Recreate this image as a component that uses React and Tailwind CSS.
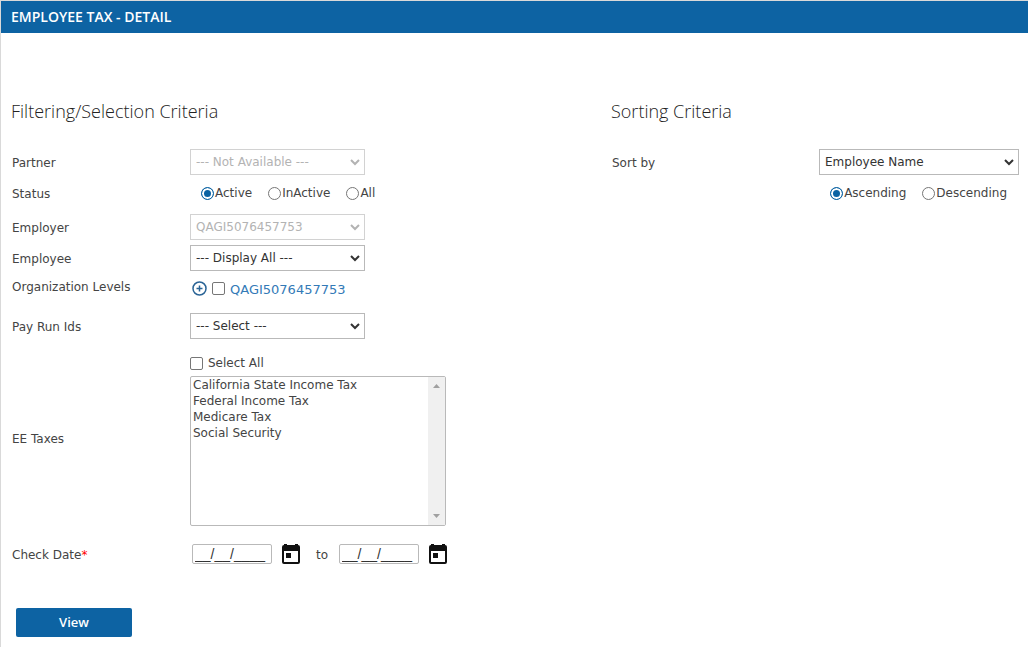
// src/pages/EmployeeTaxDetail.jsx
import { useState } from "react";

const taxes = [
  "California State Income Tax",
  "Federal Income Tax",
  "Medicare Tax",
  "Social Security",
];

const SelectBox = ({ id, options, disabled, className }) => (
  <div
    className={`relative h-[26px] border ${
      disabled ? "border-[#d2d2d2] text-[#b3b3b3]" : "border-[#b9b9b9] text-[#333]"
    } ${className}`}
  >
    <select
      id={id}
      disabled={disabled}
      className="h-full w-full appearance-none bg-transparent pl-[5px] pr-5 opacity-100"
    >
      {options.map((option) => (
        <option key={option}>{option}</option>
      ))}
    </select>
    <svg
      className="pointer-events-none absolute right-1 top-2 h-2 w-[10px]"
      viewBox="0 0 10 8"
      fill="none"
      stroke="currentColor"
      strokeWidth="2"
    >
      <path d="M1 2l4 4 4-4" />
    </svg>
  </div>
);

const Radio = ({ name, label, checked, onChange }) => (
  <label className="flex items-center gap-px">
    <input
      type="radio"
      name={name}
      checked={checked}
      onChange={onChange}
      className="h-[13px] w-[13px] appearance-none rounded-full border border-[#767676] bg-white checked:border-[#0b63a3] checked:bg-[#0b63a3] checked:shadow-[inset_0_0_0_2px_#fff]"
    />
    {label}
  </label>
);

const Checkbox = ({ id, ...props }) => (
  <input
    id={id}
    type="checkbox"
    className="h-[13px] w-[13px] appearance-none rounded-[2px] border border-[#767676] bg-white checked:bg-[#0b63a3]"
    {...props}
  />
);

const DateField = ({ label }) => (
  <div className="flex items-center gap-[10px]">
    <input
      type="text"
      aria-label={label}
      defaultValue="__/__/____"
      className="h-5 w-20 rounded-[2px] border border-[#b9b9b9] px-[2px] font-['Liberation_Sans',sans-serif] text-sm leading-4 text-[#333]"
    />
    <button type="button" aria-label={`Pick ${label}`}>
      <svg className="h-5 w-[18px]" viewBox="0 0 18 20">
        <path
          fill="#111"
          fillRule="evenodd"
          d="M2 0h3v1h8V0h3v1a2 2 0 0 1 2 2v15a2 2 0 0 1-2 2H2a2 2 0 0 1-2-2V3a2 2 0 0 1 2-2zM2 7v11h14V7zM4 9h5v5H4z"
        />
      </svg>
    </button>
  </div>
);

const Row = ({ label, htmlFor, className, children }) => (
  <div className={`flex items-center ${className}`}>
    <label htmlFor={htmlFor} className="w-[178px] shrink-0 pt-px">
      {label}
    </label>
    {children}
  </div>
);

const App = () => {
  const [status, setStatus] = useState("Active");
  const [order, setOrder] = useState("Ascending");
  const [selected, setSelected] = useState([]);

  return (
    <div className="min-h-screen border-l border-t border-[#d9d9d9] bg-white font-['DejaVu_Sans',sans-serif] text-xs text-[#444]">
      {/* Title bar */}
      <header className="flex h-8 items-center bg-[#0d63a3] px-[10px]">
        <h1 className="font-['Open_Sans',sans-serif] text-sm font-semibold text-white">
          EMPLOYEE TAX - DETAIL
        </h1>
      </header>

      <form onSubmit={(e) => e.preventDefault()}>
        <div className="flex justify-between pl-[11px] pr-[9px] pt-16">
          {/* Filters */}
          <section>
            <h2 className="-ml-px mb-[24px] font-['Open_Sans',sans-serif] text-lg leading-7 font-light text-[#222]">
              Filtering/Selection Criteria
            </h2>

            <Row label="Partner" htmlFor="partner" className="h-[26px]">
              <SelectBox
                id="partner"
                options={["--- Not Available ---"]}
                disabled
                className="w-[175px]"
              />
            </Row>
            <Row label="Status" className="mt-[5px] h-[26px]">
              <div className="flex gap-4 pl-[11px]">
                {["Active", "InActive", "All"].map((item) => (
                  <Radio
                    key={item}
                    name="status"
                    label={item}
                    checked={status === item}
                    onChange={() => setStatus(item)}
                  />
                ))}
              </div>
            </Row>
            <Row label="Employer" htmlFor="employer" className="mt-2 h-[26px]">
              <SelectBox
                id="employer"
                options={["QAGI5076457753"]}
                disabled
                className="w-[175px]"
              />
            </Row>
            <Row label="Employee" htmlFor="employee" className="mt-[5px] h-[26px]">
              <SelectBox
                id="employee"
                options={["--- Display All ---"]}
                className="w-[175px]"
              />
            </Row>
            <Row label="Organization Levels" htmlFor="org" className="mt-[2px] h-[26px]">
              <div className="flex items-center gap-[5px] pl-[2px] pt-1">
                <button type="button" aria-label="Expand" className="text-[#2a6496]">
                  <svg
                    className="h-[15px] w-[15px]"
                    viewBox="0 0 15 15"
                    fill="none"
                    stroke="currentColor"
                    strokeWidth="1.5"
                  >
                    <circle cx="7.5" cy="7.5" r="6.5" />
                    <path d="M7.5 4.5v6M4.5 7.5h6" />
                  </svg>
                </button>
                <Checkbox id="org" />
                <a href="#org" className="pt-1 text-[13px] leading-4 text-[#337ab7]">
                  QAGI5076457753
                </a>
              </div>
            </Row>
            <Row label="Pay Run Ids" htmlFor="payrun" className="mt-[14px] h-[26px]">
              <SelectBox id="payrun" options={["--- Select ---"]} className="w-[175px]" />
            </Row>
            <Row label="EE Taxes" htmlFor="taxes" className="mt-3">
              <div>
                <label className="mb-px flex h-6 items-center gap-[5px]">
                  <Checkbox
                    checked={selected.length === taxes.length}
                    onChange={(e) => setSelected(e.target.checked ? taxes : [])}
                  />
                  Select All
                </label>
                <div className="flex h-[150px] w-64 rounded-[2px] border border-[#b9b9b9]">
                  <select
                    id="taxes"
                    multiple
                    value={selected}
                    onChange={(e) =>
                      setSelected([...e.target.selectedOptions].map((o) => o.value))
                    }
                    className="h-full min-w-0 flex-1 overflow-hidden pt-px"
                  >
                    {taxes.map((tax) => (
                      <option key={tax} className="h-4 min-h-0 px-[2px] py-0 leading-4">
                        {tax}
                      </option>
                    ))}
                  </select>
                  <div className="flex w-[17px] flex-col items-center justify-between bg-[#f0f0f0] py-[7px]">
                    <svg className="h-1 w-[7px]" viewBox="0 0 7 4" fill="#a0a0a0">
                      <path d="M3.5 0L7 4H0z" />
                    </svg>
                    <svg className="h-1 w-[7px]" viewBox="0 0 7 4" fill="#a0a0a0">
                      <path d="M0 0h7L3.5 4z" />
                    </svg>
                  </div>
                </div>
              </div>
            </Row>
            <Row
              label={
                <>
                  Check Date<span className="text-[#f00]">*</span>
                </>
              }
              className="mt-[15px] h-[26px]"
            >
              <div className="flex items-center pl-[2px]">
                <DateField label="start date" />
                <span className="ml-4 mr-[11px] pt-[2px]">to</span>
                <DateField label="end date" />
              </div>
            </Row>
          </section>

          {/* Sorting */}
          <section className="w-[407px]">
            <h2 className="-ml-px mb-[24px] font-['Open_Sans',sans-serif] text-lg leading-7 font-light text-[#222]">
              Sorting Criteria
            </h2>
            <div className="flex h-[26px] items-center justify-between">
              <label htmlFor="sort" className="pt-px">
                Sort by
              </label>
              <SelectBox id="sort" options={["Employee Name"]} className="w-[200px]" />
            </div>
            <div className="mt-[5px] flex h-[26px] items-center justify-end gap-4 pr-3">
              {["Ascending", "Descending"].map((item) => (
                <Radio
                  key={item}
                  name="order"
                  label={item}
                  checked={order === item}
                  onChange={() => setOrder(item)}
                />
              ))}
            </div>
          </section>
        </div>

        <button
          type="submit"
          className="ml-[15px] mt-[41px] h-[29px] w-[116px] rounded-[2px] bg-[#0d63a3] font-['Open_Sans',sans-serif] text-[13px] font-semibold text-white"
        >
          View
        </button>
      </form>
    </div>
  );
};

export default App;
